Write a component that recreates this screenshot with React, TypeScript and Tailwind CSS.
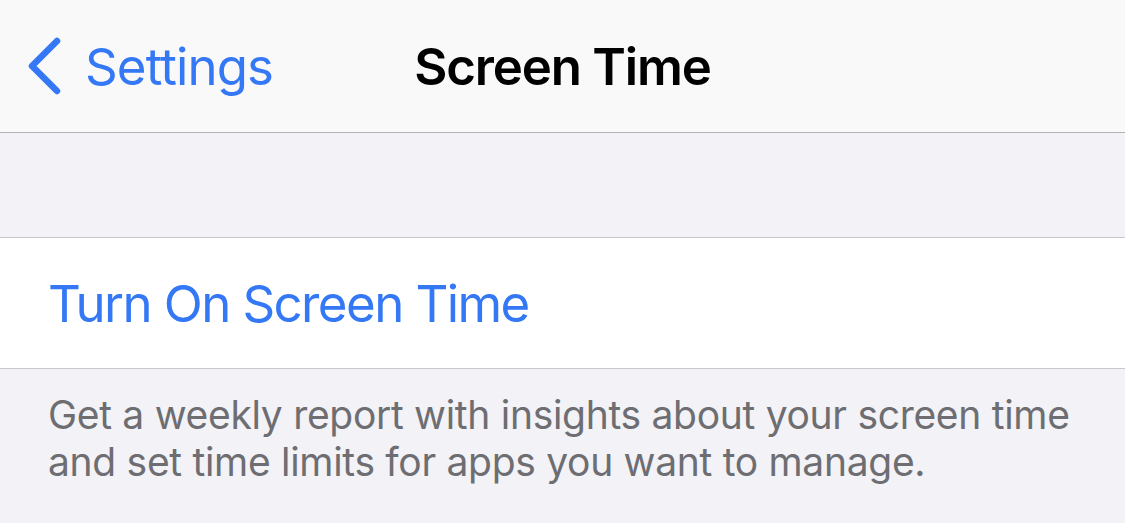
export default function App() {
  return (
    <div className="min-h-[523px] w-full bg-[#f2f2f7] font-['Inter','Noto_Sans',sans-serif] antialiased">
      <header className="relative flex h-[133px] items-center border-b border-[#b4b4b6] bg-[#f9f9f9]">
        <button className="flex items-center pl-[26px] text-[#3478f6]">
          <svg width="36" height="58" viewBox="0 0 36 58" fill="none">
            <path
              d="M31 4 L6 29 L31 54"
              stroke="currentColor"
              strokeWidth="6.5"
              strokeLinecap="round"
              strokeLinejoin="round"
            />
          </svg>
          <span className="ml-[23px] text-[51px] leading-none tracking-[-0.9px]">Settings</span>
        </button>
        <h1 className="absolute left-1/2 -translate-x-1/2 text-[51px] font-semibold leading-none tracking-[-1.2px] text-black">
          Screen Time
        </h1>
      </header>

      <div className="h-[104px]" />

      <div className="flex h-[132px] items-center border-y border-[#c8c8cc] bg-white pl-[48px]">
        <span className="text-[51px] leading-none tracking-[-1.6px] text-[#3478f6]">Turn On Screen Time</span>
      </div>

      <p className="px-[48px] pt-[22px] text-[39px] leading-[47px] tracking-[-0.3px] text-[#6d6d72]">
        Get a weekly report with insights about your screen time and set time limits for apps you want to
        manage.
      </p>
    </div>
  )
}
